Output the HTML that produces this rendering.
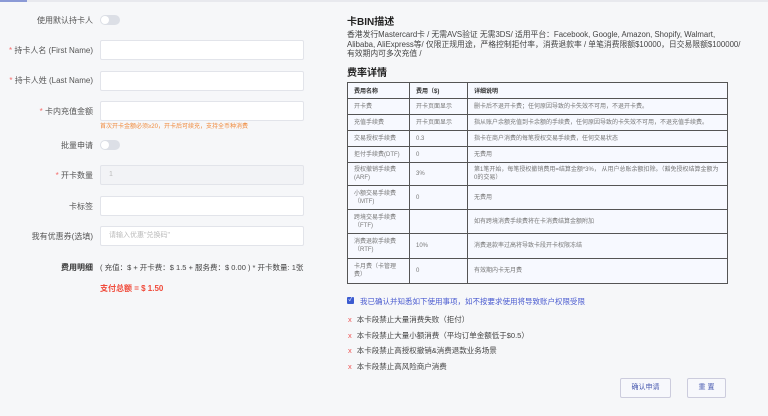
<!DOCTYPE html>
<html><head><meta charset="utf-8"><style>
*{box-sizing:border-box;margin:0;padding:0}
body{width:768px;height:416px;background:#f6f7f9;font-family:"Liberation Sans","Noto Sans CJK SC",sans-serif;color:#555;position:relative;overflow:hidden;font-size:8px}
.top{position:absolute;left:0;top:0;width:768px;height:2px;background:#e8e9ee}
.top i{position:absolute;left:0;top:0;width:27px;height:2px;background:#8b9ad6}
.lab{position:absolute;right:675px;font-size:8px;color:#555;white-space:nowrap}
.lab b{color:#f56c6c;font-weight:normal}
.inp{position:absolute;left:100px;width:204px;height:20px;background:#fff;border:1px solid #e2e4ea;border-radius:2px;font-size:7px;color:#bbb;padding-left:8px;line-height:18px}
.tog{position:absolute;left:100px;width:20px;height:10px;border-radius:5px;background:#dcdfe6}
.tog:after{content:"";position:absolute;left:1px;top:1px;width:8px;height:8px;border-radius:50%;background:#fff}
.r{position:absolute;white-space:nowrap}
table{position:absolute;left:347px;top:82px;width:381px;border-collapse:collapse;background:#f7f9ff;font-size:6px;color:#777}
td{border:1px solid #555;padding:0 6px;vertical-align:middle;line-height:8px}
th{border:1px solid #555;text-align:left;padding:0 6px;font-size:6px;color:#333;height:16px}
.x{color:#e55;margin-right:5px}
.btn{position:absolute;top:378px;height:20px;border:1px solid #ccd;background:#f7f8fc;border-radius:2px;color:#4a5bb0;font-size:7px;text-align:center;line-height:18px}
</style></head><body>
<div class="top"><i></i></div>
<div class="lab" style="top:15px">使用默认持卡人</div><div class="tog" style="top:15px"></div>
<div class="lab" style="top:45px"><b>* </b>持卡人名 (First Name)</div><div class="inp" style="top:40px"></div>
<div class="lab" style="top:75px"><b>* </b>持卡人姓 (Last Name)</div><div class="inp" style="top:71px"></div>
<div class="lab" style="top:106px"><b>* </b>卡内充值金额</div><div class="inp" style="top:101px"></div>
<div class="r" style="left:100px;top:121px;font-size:6px;color:#f08a3c">首次开卡金额必须≥20，开卡后可续充，支持全币种消费</div>
<div class="lab" style="top:140px">批量申请</div><div class="tog" style="top:140px"></div>
<div class="lab" style="top:170px"><b>* </b>开卡数量</div><div class="inp" style="top:165px;background:#f2f3f6">1</div>
<div class="lab" style="top:201px">卡标签</div><div class="inp" style="top:196px"></div>
<div class="lab" style="top:231px">我有优惠券(选填)</div><div class="inp" style="top:226px">请输入优惠"兑换码"</div>
<div class="lab" style="top:262px;color:#333;font-weight:bold">费用明细</div>
<div class="r" style="left:100px;top:262px;font-size:7.5px;color:#444">( 充值：$ + 开卡费：$ 1.5 + 服务费：$ 0.00 ) * 开卡数量: 1张</div>
<div class="r" style="left:100px;top:283px;font-size:8px;color:#f04a3a;font-weight:bold">支付总额 = $ 1.50</div>

<div class="r" style="left:347px;top:13px;font-size:10px;font-weight:bold;color:#222">卡BIN描述</div>
<div class="r" style="left:347px;top:30px;font-size:7.8px;color:#444;line-height:9.7px">香港发行Mastercard卡 / 无需AVS验证 无需3DS/ 适用平台：Facebook, Google, Amazon, Shopify, Walmart,<br>Alibaba, AliExpress等/ 仅限正规用途，严格控制拒付率，消费退款率 / 单笔消费限额$10000，日交易限额$100000/<br>有效期内可多次充值 /</div>
<div class="r" style="left:347px;top:64px;font-size:10px;font-weight:bold;color:#222">费率详情</div>
<table>
<colgroup><col style="width:62px"><col style="width:58px"><col></colgroup>
<tr><th>费用名称</th><th>费用（$)</th><th>详细说明</th></tr>
<tr style="height:16px"><td>开卡费</td><td>开卡页面显示</td><td>删卡后不退开卡费；任何原因导致的卡失效不可用，不退开卡费。</td></tr>
<tr style="height:16px"><td>充值手续费</td><td>开卡页面显示</td><td>指从账户余额充值到卡余额的手续费，任何原因导致的卡失效不可用，不退充值手续费。</td></tr>
<tr style="height:16px"><td>交易授权手续费</td><td>0.3</td><td>指卡在商户消费的每笔授权交易手续费，任何交易状态</td></tr>
<tr style="height:16px"><td>拒付手续费(DTF)</td><td>0</td><td>无费用</td></tr>
<tr style="height:23px"><td>授权撤销手续费(ARF)</td><td>3%</td><td>第1笔开始，每笔授权撤销费用=结算金额*3%， 从用户总账余额扣除。（豁免授权结算金额为0的交易）</td></tr>
<tr style="height:24px"><td>小额交易手续费（MTF)</td><td>0</td><td>无费用</td></tr>
<tr style="height:24px"><td>跨境交易手续费（FTF)</td><td></td><td>如有跨境消费手续费将在卡消费结算金额附加</td></tr>
<tr style="height:25px"><td>消费退款手续费（RTF)</td><td>10%</td><td>消费退款率过高将导致卡段开卡权限冻结</td></tr>
<tr style="height:25px"><td>卡月费（卡管理费）</td><td>0</td><td>有效期内卡无月费</td></tr>
</table>
<div class="r" style="left:347px;top:297px;width:7px;height:7px;background:#3b5bd0;border-radius:1px;color:#fff;font-size:6px;line-height:7px;text-align:center">✓</div>
<div class="r" style="left:360px;top:296px;font-size:7.5px;color:#4a5bd0">我已确认并知悉如下使用事项，如不按要求使用将导致账户权限受限</div>
<div class="r" style="left:348px;top:314px;font-size:7.5px;color:#444"><span class="x">x</span>本卡段禁止大量消费失败（拒付）</div>
<div class="r" style="left:348px;top:330px;font-size:7.5px;color:#444"><span class="x">x</span>本卡段禁止大量小额消费（平均订单金额低于$0.5）</div>
<div class="r" style="left:348px;top:345px;font-size:7.5px;color:#444"><span class="x">x</span>本卡段禁止高授权撤销&amp;消费退款业务场景</div>
<div class="r" style="left:348px;top:361px;font-size:7.5px;color:#444"><span class="x">x</span>本卡段禁止高风险商户消费</div>
<div class="btn" style="left:620px;width:51px">确认申请</div>
<div class="btn" style="left:687px;width:39px">重 置</div>
</body></html>
